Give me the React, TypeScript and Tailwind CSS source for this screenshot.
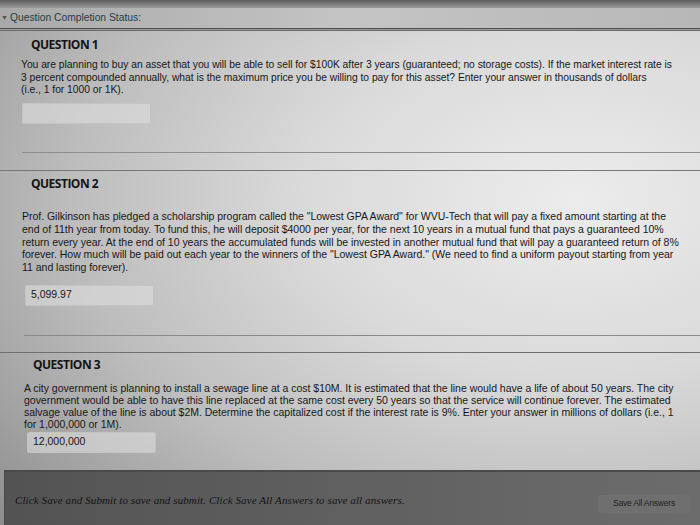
import React from "react";

const base = "font-['Liberation_Sans',Arial,sans-serif] text-[#181818] tracking-[-0.02px]";
const body = `${base} text-[10.5px]`;
const heading = "font-['Open_Sans','Lato',sans-serif] font-bold text-[12px] leading-[16px] text-[#141414] tracking-[-0.5px]";

function Field({ value, cls }: { value?: string; cls: string }) {
  return (
    <div className={`h-[21px] w-[129px] rounded-[2px] border border-[#c4c4c4] bg-[#dedede]/60 px-[5px] flex items-center ${body} text-[#2a2a2a] ${cls}`}>
      {value}
    </div>
  );
}

export default function App() {
  return (
    <div className="w-[700px] h-[525px] overflow-hidden relative bg-[radial-gradient(ellipse_110%_95%_at_82%_38%,#ececec_0%,#dadada_35%,#bdbdbd_65%,#8c8c8c_100%)]">
      {/* top dark band */}
      <div className="h-[8px] bg-[linear-gradient(to_bottom,#5d5d5d,#9a9a9a)]" />
      {/* completion status */}
      <div className="h-[20px] flex items-center pl-[1px] bg-[linear-gradient(to_right,#a9a9a9,#c4c4c4_50%,#b7b7b7)]">
        <span className="text-[7px] text-[#555] mr-[2px]">▼</span>
        <span className="font-['Liberation_Sans',Arial,sans-serif] text-[10.3px] text-[#1f3d47]">Question Completion Status:</span>
      </div>
      <div className="h-[1px] bg-[#4e4e4e]" />
      <div className="h-[1px] bg-[#9a9a9a]" />
      <div className="h-[1px] bg-[#6a6a6a]" />

      {/* Question 1 */}
      <div className="pl-[31px] pt-[6px]">
        <div className={heading}>QUESTION 1</div>
      </div>
      <div className={`pl-[21px] pt-[6px] leading-[12.7px] whitespace-nowrap ${base} text-[10.3px]`}>
        You are planning to buy an asset that you will be able to sell for $100K after 3 years (guaranteed; no storage costs). If the market interest rate is
        <br />
        3 percent compounded annually, what is the maximum price you be willing to pay for this asset? Enter your answer in thousands of dollars
        <br />
        (i.e., 1 for 1000 or 1K).
      </div>
      <Field cls="ml-[22px] mt-[6px]" />
      <div className="ml-[22px] mt-[28px] h-[1px] bg-[#8e8e8e]" />
      <div className="mt-[17px] h-[1px] bg-[#767676]" />

      {/* Question 2 */}
      <div className="pl-[31px] pt-[5px]">
        <div className={heading}>QUESTION 2</div>
      </div>
      <div className={`pl-[22px] pt-[18px] leading-[12.7px] whitespace-nowrap ${body}`}>
        Prof. Gilkinson has pledged a scholarship program called the "Lowest GPA Award" for WVU-Tech that will pay a fixed amount starting at the
        <br />
        end of 11th year from today. To fund this, he will deposit $4000 per year, for the next 10 years in a mutual fund that pays a guaranteed 10%
        <br />
        return every year. At the end of 10 years the accumulated funds will be invested in another mutual fund that will pay a guaranteed return of 8%
        <br />
        forever. How much will be paid out each year to the winners of the "Lowest GPA Award." (We need to find a uniform payout starting from year
        <br />
        11 and lasting forever).
      </div>
      <Field value="5,099.97" cls="ml-[25px] mt-[11px]" />
      <div className="ml-[24px] mt-[29px] h-[1px] bg-[#8a8a8a]" />
      <div className="mt-[16px] h-[1px] bg-[#6f6f6f]" />

      {/* Question 3 */}
      <div className="pl-[33px] pt-[4px]">
        <div className={heading}>QUESTION 3</div>
      </div>
      <div className={`pl-[24px] pt-[9px] leading-[12px] whitespace-nowrap ${body}`}>
        A city government is planning to install a sewage line at a cost $10M. It is estimated that the line would have a life of about 50 years. The city
        <br />
        government would be able to have this line replaced at the same cost every 50 years so that the service will continue forever. The estimated
        <br />
        salvage value of the line is about $2M. Determine the capitalized cost if the interest rate is 9%. Enter your answer in millions of dollars (i.e., 1
        <br />
        for 1,000,000 or 1M).
      </div>
      <Field value="12,000,000" cls="ml-[27px] mt-[2px]" />

      {/* footer */}
      <div className="mt-[17px] ml-[4px] h-[60px] border-t-[2px] border-l border-[#4a4a4a] bg-[linear-gradient(to_right,#535353,#606060_50%,#6c6c6c)] flex items-start justify-between pl-[10px] pr-[10px] pt-[20px]">
        <span className="font-['Liberation_Serif','Times_New_Roman',serif] italic text-[11px] text-[#141414] tracking-[0.1px]">
          Click Save and Submit to save and submit. Click Save All Answers to save all answers.
        </span>
        <div className="mt-[3px] h-[18px] w-[92px] bg-[#6f6f6f] rounded-[2px] flex items-center justify-center font-['Liberation_Sans_Narrow','Liberation_Sans',Arial,sans-serif] text-[8.5px] text-[#222] tracking-[-0.2px]">
          Save All Answers
        </div>
      </div>
    </div>
  );
}
